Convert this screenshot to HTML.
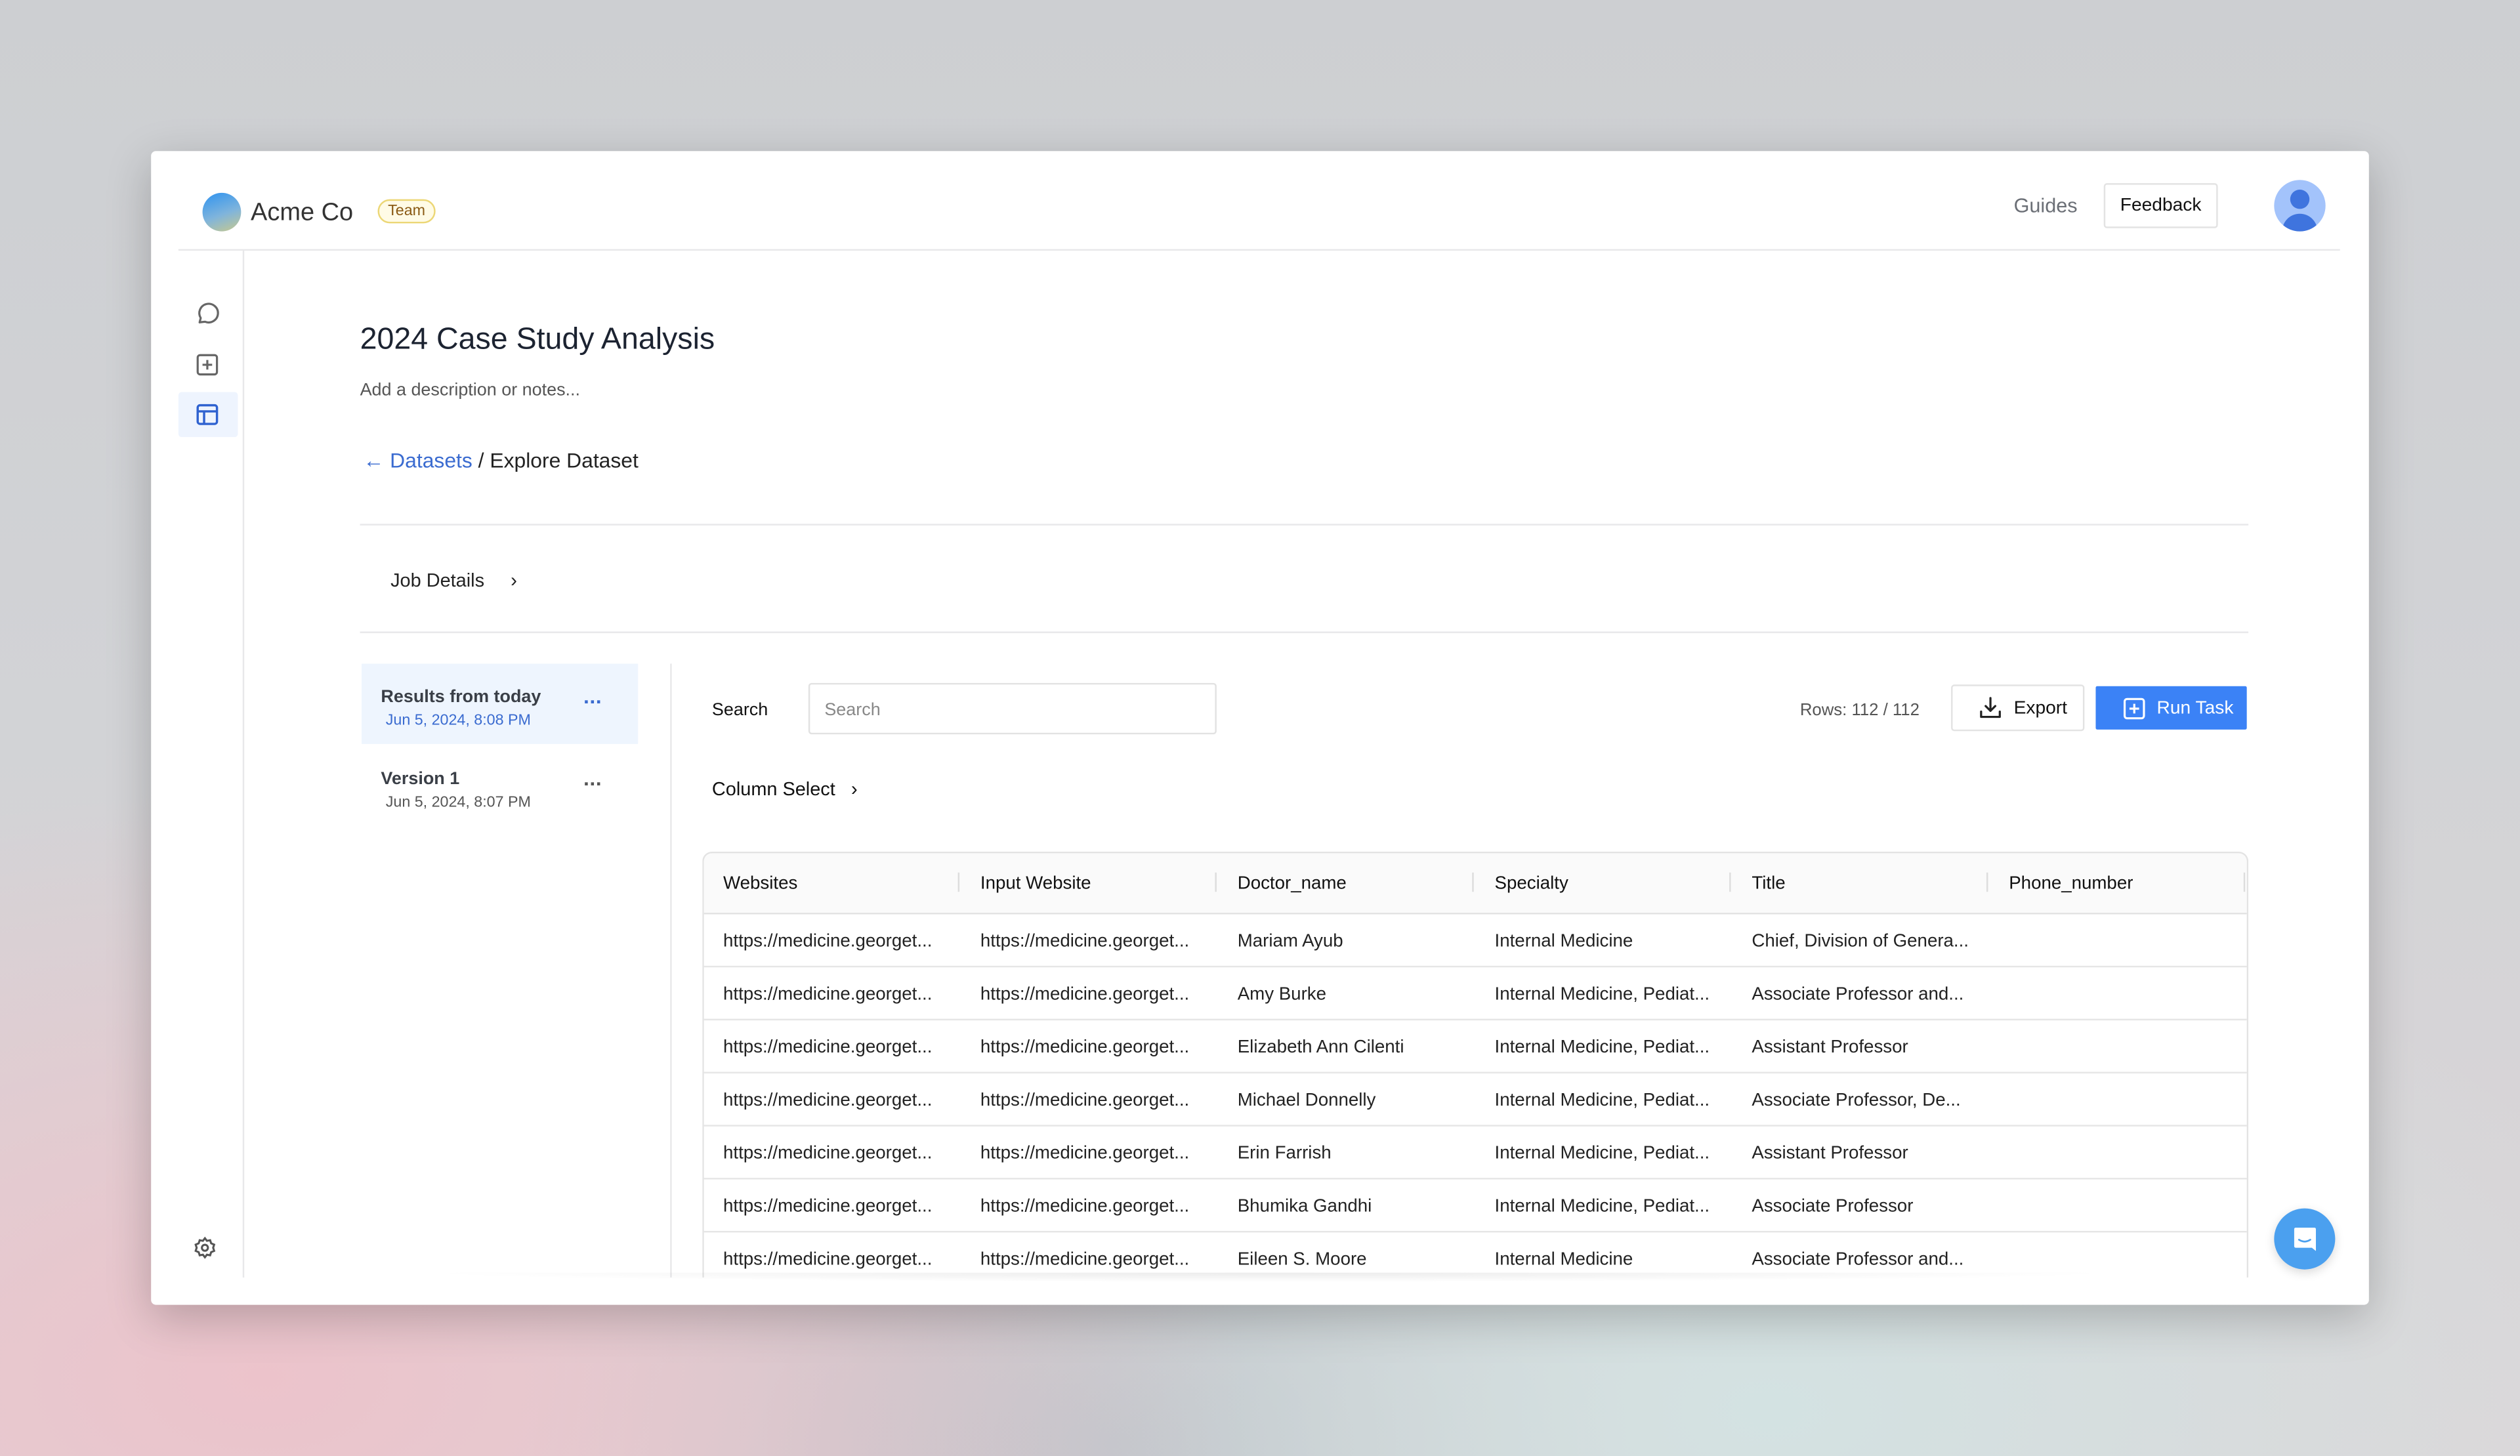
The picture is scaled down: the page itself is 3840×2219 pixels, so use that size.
<!DOCTYPE html>
<html><head><meta charset="utf-8"><style>
*{box-sizing:border-box;margin:0;padding:0}
html,body{width:3840px;height:2219px;overflow:hidden}
body{font-family:"Liberation Sans",Arial,sans-serif;color:#1f2937;background:#d6dcdc}
#bg{position:absolute;left:0;top:0;width:3840px;height:2219px;
background:
radial-gradient(ellipse 1500px 900px at 400px 2100px,#ecc3cb 0%,rgba(236,195,203,0) 100%),
radial-gradient(ellipse 1400px 800px at 2700px 2150px,#d3e2e2 0%,rgba(211,226,226,0) 100%),
radial-gradient(ellipse 900px 600px at 1700px 2200px,#b9bcc3 0%,rgba(185,188,195,0) 100%),
linear-gradient(180deg,#cdcfd2 0%,#d2d3d6 50%,#dcd6d8 100%)}
#w{position:absolute;left:0;top:0;width:1568px;height:906px;transform:scale(2.44898);transform-origin:0 0}
.a{position:absolute}
.card{left:94px;top:94px;width:1380px;height:718px;background:#fff;border-radius:3px;box-shadow:0 8px 28px rgba(0,0,0,.22)}
.t{white-space:nowrap;line-height:1;margin-top:1px}
.hl{background:#e8e8ea}
.cell{font-size:11.3px;color:#222}
.dots{font-size:13px;font-weight:bold;letter-spacing:-0.5px}
</style></head><body><div id="bg"></div>
<div id="w">
<div class="a card"></div>
<div class="a" style="left:126px;top:120px;width:24px;height:24px;border-radius:50%;background:linear-gradient(160deg,#2f93f0 0%,#7fb4dc 55%,#c8c98e 100%)"></div>
<div class="a t" style="left:156px;top:124px;font-size:15.5px;color:#333">Acme Co</div>
<div class="a t" style="left:235px;top:123px;width:36px;height:15px;border:1px solid #ecd776;background:#fffbe6;border-radius:8px;font-size:9.5px;color:#8a5a14;text-align:center;line-height:13px">Team</div>
<div class="a t" style="left:1253px;top:121px;font-size:12.5px;color:#6b6f76">Guides</div>
<div class="a t" style="left:1309px;top:113px;width:71px;height:28px;border:1px solid #e3e3e3;border-radius:2px;font-size:11.5px;color:#111;text-align:center;line-height:27px">Feedback</div>
<div class="a" style="left:1415px;top:112px;width:32px;height:32px;border-radius:50%;background:#a3c3fb;overflow:hidden">
 <div class="a" style="left:10px;top:6px;width:12px;height:12px;border-radius:50%;background:#3f74de"></div>
 <div class="a" style="left:5px;top:21px;width:22px;height:14px;border-radius:11px 11px 0 0;background:#3f74de"></div>
</div>
<div class="a hl" style="left:111px;top:155px;width:1345px;height:1px"></div>
<div class="a hl" style="left:151px;top:156px;width:1px;height:639px"></div>
<svg class="a" style="left:121px;top:187px" width="16" height="16" viewBox="0 0 16 16" fill="none" stroke="#666" stroke-width="1.3" stroke-linejoin="round"><path d="M3.2 13.6 L3.9 10.9 A5.8 5.8 0 1 1 6.6 13.2 Z"/></svg>
<svg class="a" style="left:121px;top:219px" width="16" height="16" viewBox="0 0 16 16" fill="none" stroke="#666" stroke-width="1.3"><rect x="2" y="2" width="12" height="12" rx="1.5"/><path d="M8 5v6M5 8h6"/></svg>
<div class="a" style="left:111px;top:244px;width:37px;height:28px;background:#eef4fe;border-radius:2px"></div>
<svg class="a" style="left:121px;top:250px" width="16" height="16" viewBox="0 0 16 16" fill="none" stroke="#2f62d0" stroke-width="1.4"><rect x="2" y="2.2" width="12" height="11.6" rx="1.5"/><path d="M2 6h12M6 6v7.8"/></svg>
<svg class="a" style="left:120px;top:769px" width="15" height="15" viewBox="0 0 24 24" fill="none" stroke="#555" stroke-width="2"><circle cx="12" cy="12" r="3"/><path d="M12 2.5l2 2.6 3.2-.6 1 3.1 3 1.3-1 3.1 1 3.1-3 1.3-1 3.1-3.2-.6-2 2.6-2-2.6-3.2.6-1-3.1-3-1.3 1-3.1-1-3.1 3-1.3 1-3.1 3.2.6z"/></svg>
<div class="a t" style="left:224px;top:201px;font-size:19px;color:#1c2331">2024 Case Study Analysis</div>
<div class="a t" style="left:224px;top:237px;font-size:11px;color:#555">Add a description or notes...</div>
<div class="a t" style="left:226px;top:279px;font-size:13px;color:#222"><span style="color:#3a6bd0">&#8592; Datasets</span> / Explore Dataset</div>
<div class="a hl" style="left:224px;top:326px;width:1175px;height:1px"></div>
<div class="a t" style="left:243px;top:354px;font-size:11.8px;color:#222">Job Details&nbsp;&nbsp;&nbsp;&nbsp;&nbsp;<span style="font-size:12px">&#8250;</span></div>
<div class="a hl" style="left:224px;top:393px;width:1175px;height:1px"></div>
<div class="a" style="left:225px;top:413px;width:172px;height:50px;background:#eef5fe"></div>
<div class="a t" style="left:237px;top:428px;font-size:11px;font-weight:bold;color:#3a3f47">Results from today</div>
<div class="a t" style="left:240px;top:443px;font-size:9.5px;color:#3a6bd0">Jun 5, 2024, 8:08 PM</div>
<div class="a t dots" style="left:363px;top:429px;color:#3a6bd0">&middot;&middot;&middot;</div>
<div class="a t" style="left:237px;top:479px;font-size:11px;font-weight:bold;color:#3a3f47">Version 1</div>
<div class="a t" style="left:240px;top:494px;font-size:9.5px;color:#555">Jun 5, 2024, 8:07 PM</div>
<div class="a t dots" style="left:363px;top:480px;color:#555">&middot;&middot;&middot;</div>
<div class="a hl" style="left:417px;top:413px;width:1px;height:382px"></div>
<div class="a t" style="left:443px;top:436px;font-size:11px;color:#111">Search</div>
<div class="a" style="left:503px;top:425px;width:254px;height:32px;border:1px solid #e2e2e2;border-radius:2px"></div>
<div class="a t" style="left:513px;top:436px;font-size:11px;color:#888">Search</div>
<div class="a t" style="left:1120px;top:436px;font-size:10.5px;color:#555">Rows: 112 / 112</div>
<div class="a" style="left:1214px;top:426px;width:83px;height:29px;border:1px solid #e3e3e3;border-radius:2px"></div>
<svg class="a" style="left:1231px;top:433px" width="15" height="15" viewBox="0 0 16 16" fill="none" stroke="#222" stroke-width="1.4" stroke-linecap="round" stroke-linejoin="round"><path d="M8 1.5v8.5M4.8 6.8L8 10l3.2-3.2M1.8 10.5v3.5h12.4v-3.5"/></svg>
<div class="a t" style="left:1253px;top:435px;font-size:11.5px;color:#111">Export</div>
<div class="a" style="left:1304px;top:427px;width:94px;height:27px;background:#3b82f6;border-radius:1px"></div>
<svg class="a" style="left:1321px;top:434px" width="14" height="14" viewBox="0 0 14 14" fill="none" stroke="#fff" stroke-width="1.3"><rect x="1" y="1" width="12" height="12" rx="1.5"/><path d="M7 4v6M4 7h6"/></svg>
<div class="a t" style="left:1342px;top:435px;font-size:11.5px;color:#fff">Run Task</div>
<div class="a t" style="left:443px;top:484px;font-size:11.8px;color:#111">Column Select&nbsp;&nbsp;&nbsp;<span style="font-size:12px">&#8250;</span></div>
<div class="a" style="left:437px;top:530px;width:962px;height:265px;border:1px solid #e3e3e3;border-bottom:none;border-radius:6px 6px 0 0;overflow:hidden">
 <div class="a" style="left:0;top:0;width:962px;height:38px;background:#fafafa;border-bottom:1px solid #e3e3e3"></div>
</div>
<div id="tb"></div>
<div class="a" style="left:260px;top:792px;width:1060px;height:6px;background:radial-gradient(ellipse at 50% 0%,rgba(0,0,0,.08),rgba(0,0,0,0) 70%)"></div>
<div class="a" style="left:1415px;top:752px;width:38px;height:38px;border-radius:50%;background:#4ba0ef;box-shadow:0 2px 6px rgba(0,0,0,.15)"></div>
<svg class="a" style="left:1424px;top:761px" width="20" height="20" viewBox="0 0 20 20"><path d="M3.5 3 H16 Q17 3 17 4 V17.5 L14.5 15.5 H4.5 Q3.5 15.5 3.5 14.5 V4 Q3.5 3 4.5 3Z" fill="#fff"/><path d="M6.5 10.5 Q10 12.8 13.5 10.5" fill="none" stroke="#4ba0ef" stroke-width="1.1" stroke-linecap="round"/></svg>
</div>
<script>
var cols=["Websites","Input Website","Doctor_name","Specialty","Title","Phone_number"];
var rows=[["Mariam Ayub","Internal Medicine","Chief, Division of Genera..."],
["Amy Burke","Internal Medicine, Pediat...","Associate Professor and..."],
["Elizabeth Ann Cilenti","Internal Medicine, Pediat...","Assistant Professor"],
["Michael Donnelly","Internal Medicine, Pediat...","Associate Professor, De..."],
["Erin Farrish","Internal Medicine, Pediat...","Assistant Professor"],
["Bhumika Gandhi","Internal Medicine, Pediat...","Associate Professor"],
["Eileen S. Moore","Internal Medicine","Associate Professor and..."]];
var h="";
for(var i=0;i<6;i++){h+='<div class="a t cell" style="left:'+(450+160*i)+'px;top:544px;color:#111">'+cols[i]+'</div>';
h+='<div class="a" style="left:'+(596+160*i)+'px;top:543px;width:1px;height:12px;background:#ddd"></div>';}
for(var r=0;r<7;r++){var y=580+33*r;var d=rows[r];
var v=["https://medicine.georget...","https://medicine.georget...",d[0],d[1],d[2]];
for(var c=0;c<5;c++)h+='<div class="a t cell" style="left:'+(450+160*c)+'px;top:'+y+'px">'+v[c]+'</div>';
if(r<6)h+='<div class="a" style="left:438px;top:'+(601+33*r)+'px;width:960px;height:1px;background:#e6e6e6"></div>';}
document.getElementById("tb").outerHTML=h;
</script>
</body></html>
